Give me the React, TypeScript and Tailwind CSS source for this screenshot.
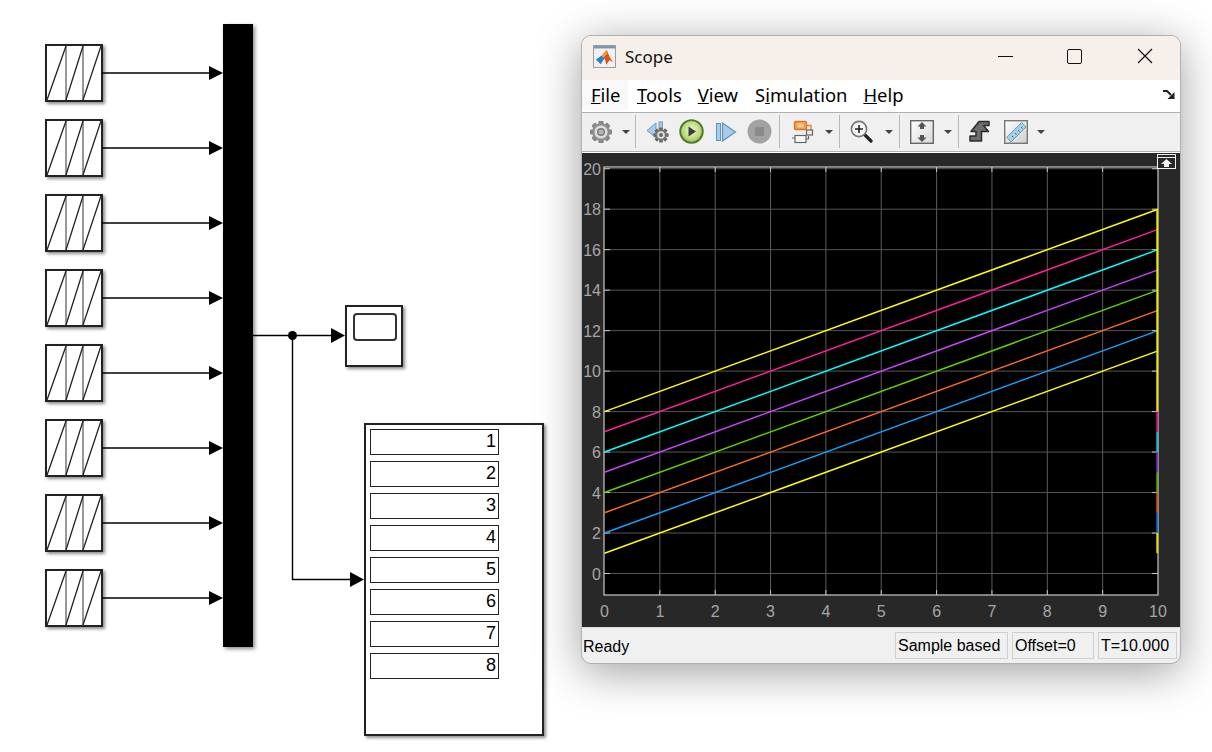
import React from "react";

const sources = [45, 120, 195, 270, 345, 420, 495, 570];
const displayRows = [1, 2, 3, 4, 5, 6, 7, 8];

function Saw() {
  return (
    <svg viewBox="0 0 54 54" className="w-full h-full block">
      <path d="M19 0V54M36 0V54" stroke="#777" strokeWidth="1.5" fill="none" />
      <path d="M0 54L19 0M19 54L36 0M36 54L54 0" stroke="#222" strokeWidth="1.3" fill="none" />
    </svg>
  );
}

function Wires() {
  return (
    <svg className="absolute left-0 top-0 w-[580px] h-[752px]" viewBox="0 0 580 752">
      {sources.map((y) => (
        <g key={y}>
          <path d={`M102 ${y + 28}H210`} stroke="#000" strokeWidth="1.4" />
          <path d={`M209 ${y + 21}L223 ${y + 28}L209 ${y + 35}Z`} fill="#000" />
        </g>
      ))}
      <path d="M253 335.5H332M292.5 335.5V579.5H351" stroke="#000" strokeWidth="1.4" fill="none" />
      <circle cx="292.5" cy="335.5" r="4.5" fill="#000" />
      <path d="M331 328L345 335.5L331 343Z" fill="#000" />
      <path d="M350 572L364 579.5L350 587Z" fill="#000" />
    </svg>
  );
}

function Caret() {
  return <div className="w-0 h-0 border-x-[4px] border-x-transparent border-t-[4px] border-t-[#444]" />;
}

function Sep({ ml }: { ml: string }) {
  return <div className={`w-px h-[33px] bg-[#b8b8b8] ${ml}`} />;
}

function Gear() {
  return (
    <svg width="24" height="24" viewBox="0 0 24 24" className="block">
      <g transform="translate(12 12)">
        {[0, 45, 90, 135].map((a) => (
          <rect key={a} x="-2.6" y="-11" width="5.2" height="22" rx="1" fill="#858585" transform={`rotate(${a})`} />
        ))}
        <circle r="8.8" fill="#8e8e8e" />
        <circle r="6.6" fill="#dedede" />
        <circle r="4" fill="#7a7a7a" />
        <circle r="2.6" fill="#b4b4b4" />
      </g>
    </svg>
  );
}

function BackGear() {
  return (
    <svg width="24" height="24" viewBox="0 0 24 24" className="block">
      <path d="M1 10.5L10 3V18Z" fill="#a9cbe6" stroke="#6c9cc6" strokeWidth="1" />
      <rect x="13" y="2" width="3.4" height="11" fill="#a9cbe6" stroke="#6c9cc6" strokeWidth="1" />
      <g transform="translate(15 15)">
        {[0, 45, 90, 135].map((a) => (
          <rect key={a} x="-1.8" y="-7.6" width="3.6" height="15.2" rx="0.6" fill="#666" transform={`rotate(${a})`} />
        ))}
        <circle r="5.8" fill="#777" />
        <circle r="3.8" fill="#ddd" />
        <circle r="1.9" fill="#666" />
      </g>
    </svg>
  );
}

function Play() {
  return (
    <svg width="25" height="25" viewBox="0 0 25 25" className="block">
      <defs>
        <radialGradient id="playG" cx="0.5" cy="0.45" r="0.6">
          <stop offset="0" stopColor="#f2f8d8" />
          <stop offset="0.65" stopColor="#b9d97a" />
          <stop offset="1" stopColor="#7fae3e" />
        </radialGradient>
      </defs>
      <circle cx="12.5" cy="12.5" r="11.3" fill="url(#playG)" stroke="#4e7a26" strokeWidth="1.8" />
      <path d="M9.5 7.5L17 12.5L9.5 17.5Z" fill="#3c3c3c" />
    </svg>
  );
}

function StepFwd() {
  return (
    <svg width="22" height="22" viewBox="0 0 22 22" className="block">
      <rect x="1.5" y="2.5" width="4" height="17" fill="#a9cbe6" stroke="#5f93c0" strokeWidth="1" />
      <path d="M7.5 2L20.5 11L7.5 20Z" fill="#a9cbe6" stroke="#5f93c0" strokeWidth="1.2" />
    </svg>
  );
}

function Stop() {
  return (
    <svg width="25" height="25" viewBox="0 0 25 25" className="block">
      <circle cx="12.5" cy="12.5" r="12" fill="#a2a2a2" />
      <rect x="8" y="8" width="9" height="9" fill="#8a8a8a" />
    </svg>
  );
}

function Blocks() {
  return (
    <svg width="24" height="24" viewBox="0 0 24 24" className="block">
      <path d="M16 5.5H20V12H16.5M8 21H5" stroke="#e0883a" strokeWidth="1.4" fill="none" />
      <path d="M1 18H4M15 19H17.5V16" stroke="#666" strokeWidth="1.2" fill="none" />
      <rect x="3.5" y="1.5" width="12" height="8" rx="1" fill="#f0a050" stroke="#d9762a" strokeWidth="1.3" />
      <rect x="6.5" y="3.5" width="6" height="4" fill="#f8c890" />
      <rect x="15.5" y="10" width="6" height="5" fill="#eee" stroke="#666" strokeWidth="1.2" />
      <rect x="4" y="15.5" width="11" height="7" fill="#fafafa" stroke="#666" strokeWidth="1.2" />
    </svg>
  );
}

function ZoomIn() {
  return (
    <svg width="23" height="23" viewBox="0 0 23 23" className="block">
      <path d="M14 14L21 21" stroke="#222" strokeWidth="3.2" strokeLinecap="round" />
      <circle cx="9" cy="9" r="7.6" fill="#f6f6f6" stroke="#777" strokeWidth="1.6" />
      <path d="M9 5V13M5 9H13" stroke="#222" strokeWidth="1.6" />
    </svg>
  );
}

function AutoScale() {
  return (
    <svg width="24" height="24" viewBox="0 0 24 24" className="block">
      <defs>
        <linearGradient id="asG" x1="0" y1="0" x2="1" y2="1">
          <stop offset="0" stopColor="#ffffff" />
          <stop offset="1" stopColor="#d8d8d8" />
        </linearGradient>
      </defs>
      <rect x="0.7" y="0.7" width="22.6" height="22.6" fill="url(#asG)" stroke="#666" strokeWidth="1.4" />
      <path d="M12 2L16.5 6.5H14V9H10V6.5H7.5Z" fill="#555" />
      <path d="M12 22L16.5 17.5H14V15H10V17.5H7.5Z" fill="#555" />
    </svg>
  );
}

function StepIcon() {
  return (
    <svg width="21" height="23" viewBox="0 0 21 23" className="block">
      <path d="M10 1.5H20V5.5H14.5L19.5 11.5H12.5V21H1V16H7V11.5H2Z" fill="#6d6d6d" stroke="#2b2b2b" strokeWidth="1.5" strokeLinejoin="round" />
    </svg>
  );
}

function Ruler() {
  return (
    <svg width="24" height="24" viewBox="0 0 24 24" className="block">
      <defs>
        <linearGradient id="rG" x1="0" y1="0" x2="1" y2="1">
          <stop offset="0" stopColor="#ffffff" />
          <stop offset="1" stopColor="#cfcfcf" />
        </linearGradient>
      </defs>
      <rect x="0.7" y="0.7" width="22.6" height="22.6" fill="url(#rG)" stroke="#777" strokeWidth="1.4" />
      <path d="M2.5 17.5L17.5 2.5L22 7L7 22Z" fill="#a3cfe6" stroke="#6f9fbb" strokeWidth="1" />
      <path d="M8 16L9.5 17.5M11 13L12.5 14.5M14 10L15.5 11.5M17 7L18.5 8.5" stroke="#47708a" strokeWidth="1" />
    </svg>
  );
}

function MatlabIcon() {
  return (
    <svg width="23" height="23" viewBox="0 0 24 24" className="block">
      <rect x="0.5" y="0.5" width="23" height="23" fill="#f1f1f1" stroke="#9a9a9a" />
      <rect x="1" y="1" width="22" height="2.6" fill="#7897b4" />
      <path d="M3 15L9 11L12 14L8 20Z" fill="#2e7fcb" />
      <path d="M14 5C16 8 17 14 21.5 18L17 16L14 20.5C13 16 12 14 11 13Z" fill="#d9541a" />
      <path d="M9 11L14 5L15 9L11 13Z" fill="#f09a30" />
    </svg>
  );
}

function Menu({ children, className = "" }: { children: React.ReactNode; className?: string }) {
  return <span className={className}>{children}</span>;
}

function StatusBox({ w, children, ml = "ml-[4px]" }: { w: string; children: React.ReactNode; ml?: string }) {
  return (
    <div className={`${w} ${ml} h-[27px] border border-[#cfcfcf] flex items-center pl-[2px] whitespace-nowrap`}>
      {children}
    </div>
  );
}

const lines = [
  { a: 8, c: "#ffff00" },
  { a: 7, c: "#ff1f98" },
  { a: 6, c: "#00ffff" },
  { a: 5, c: "#c644fc" },
  { a: 4, c: "#5fd100" },
  { a: 3, c: "#ff6a1f" },
  { a: 2, c: "#12a0ff" },
  { a: 1, c: "#ffff00" },
];
const ends = [
  { from: 1, to: 2, c: "#e6e000" },
  { from: 2, to: 3, c: "#0f75d0" },
  { from: 3, to: 4, c: "#d2552a" },
  { from: 4, to: 5, c: "#5fae0a" },
  { from: 5, to: 6, c: "#8a2fc4" },
  { from: 6, to: 7, c: "#12c4d4" },
  { from: 7, to: 8, c: "#e2168c" },
];

const X0 = 604.5;
const XU = 55.35;
const Y0 = 573.5;
const YU = 20.24;
const px = (t: number) => X0 + XU * t;
const py = (v: number) => Y0 - YU * v;

function Plot() {
  const xs = [0, 1, 2, 3, 4, 5, 6, 7, 8, 9, 10];
  const ys = [0, 2, 4, 6, 8, 10, 12, 14, 16, 18, 20];
  return (
    <svg className="block w-full h-full" viewBox="582 153 598 474">
      <rect x="582" y="153" width="598" height="474" fill="#282828" />
      <rect x="604" y="167" width="554" height="428" fill="#000" />
      {xs.slice(1, 10).map((t) => (
        <path key={t} d={`M${px(t)} 167V595`} stroke="#5c5c5c" strokeWidth="1" />
      ))}
      {ys.map((v) => (
        <path key={v} d={`M604 ${py(v)}H1158`} stroke="#555" strokeWidth="1" />
      ))}
      {xs.slice(1, 10).map((t) => (
        <path key={t} d={`M${px(t)} 167V172M${px(t)} 595V590`} stroke="#c4c4c4" strokeWidth="1" />
      ))}
      {ys.map((v) => (
        <path key={v} d={`M604 ${py(v)}H610M1158 ${py(v)}H1152`} stroke="#c4c4c4" strokeWidth="1" />
      ))}
      <rect x="604" y="167" width="554" height="428" fill="none" stroke="#c8c8c8" strokeWidth="1.2" />
      {lines.map((l) => (
        <path key={l.a} d={`M${X0} ${py(l.a)}L${px(10)} ${py(l.a + 10)}`} stroke={l.c} strokeWidth="1.5" fill="none" />
      ))}
      <path d={`M1157.2 ${py(18)}V${py(8)}`} stroke="#f0ea00" strokeWidth="1.8" />
      {ends.map((e) => (
        <path key={e.from} d={`M1157.2 ${py(e.to)}V${py(e.from)}`} stroke={e.c} strokeWidth="1.8" />
      ))}
      <g fontFamily="'Liberation Sans', Arial, sans-serif" fontSize="16" fill="#a6a6a6">
        {ys.map((v) => (
          <text key={v} x="601" y={py(v) + 6} textAnchor="end">{v}</text>
        ))}
        {xs.map((t) => (
          <text key={t} x={px(t)} y="616.5" textAnchor="middle">{t}</text>
        ))}
      </g>
      <rect x="1157.5" y="154.5" width="18" height="14" fill="#282828" stroke="#f2f2f2" strokeWidth="1" />
      <path d="M1158 157.5H1175" stroke="#f2f2f2" strokeWidth="1" />
      <path d="M1166.5 159L1172 164H1169V167H1164V164H1161Z" fill="#f2f2f2" />
    </svg>
  );
}

export default function App() {
  return (
    <div className="relative w-[1212px] h-[752px] bg-white overflow-hidden font-['Liberation_Sans',Arial,sans-serif]">
      {sources.map((y) => (
        <div
          key={y}
          className="absolute left-[45px] w-[58px] h-[58px] bg-white border-2 border-[#222] shadow-[2px_2px_3px_rgba(0,0,0,0.45)]"
          style={{ top: y - 1 }}
        >
          <Saw />
        </div>
      ))}
      <div className="absolute left-[223px] top-[24px] w-[30px] h-[623px] bg-black shadow-[2px_2px_4px_rgba(0,0,0,0.45)]" />
      <Wires />
      <div className="absolute left-[345px] top-[305px] w-[58px] h-[62px] bg-white border-2 border-[#222] shadow-[2px_2px_3px_rgba(0,0,0,0.45)] pl-[6px] pt-[6px]">
        <div className="w-[44px] h-[28px] rounded-[4px] border-2 border-[#333] bg-white" />
      </div>
      <div className="absolute left-[364px] top-[423px] w-[180px] h-[313px] bg-white border-2 border-[#222] shadow-[2px_2px_3px_rgba(0,0,0,0.45)] pl-[4px] pt-[4px] flex flex-col gap-[5.6px]">
        {displayRows.map((n) => (
          <div key={n} className="w-[129px] h-[26.4px] border border-[#222] flex items-center justify-end pr-[2px] pb-[2px] text-[18px] text-black leading-none">
            {n}
          </div>
        ))}
      </div>

      <div className="absolute left-[581px] top-[35px] w-[600px] h-[629px] rounded-[10px] border-[1.5px] border-[#b0b0b0] bg-[#f0f0f0] overflow-hidden flex flex-col shadow-[0_8px_45px_rgba(0,0,0,0.38)]">
        <div className="h-[43.5px] shrink-0 bg-[#f7efea] flex items-center pb-[3px] relative">
          <div className="ml-[11px]"><MatlabIcon /></div>
          <span className="ml-[9px] text-[17px] text-[#111] font-['Noto_Sans',sans-serif]">Scope</span>
          <div className="ml-auto flex items-center">
            <div className="w-[15px] h-px bg-[#111] mr-[54px]" />
            <div className="w-[15px] h-[15px] rounded-[2px] border-[1.4px] border-[#111] mr-[55px]" />
            <svg width="16" height="16" viewBox="0 0 16 16" className="block mr-[27px]">
              <path d="M1 1L15 15M15 1L1 15" stroke="#111" strokeWidth="1.2" />
            </svg>
          </div>
        </div>
        <div className="h-[33px] shrink-0 bg-white border-b border-[#b0b0b0] flex items-center pb-[2px] text-[18.4px] text-black font-['Noto_Sans',sans-serif] relative">
          <Menu className="pl-[9px] w-[46px] bg-[#f9f9f9] h-full flex items-center"><span><span className="underline">F</span>ile</span></Menu>
          <Menu className="ml-[9px]"><span className="underline">T</span>ools</Menu>
          <Menu className="ml-[16px]"><span className="underline">V</span>iew</Menu>
          <Menu className="ml-[17px]">S<span className="underline">i</span>mulation</Menu>
          <Menu className="ml-[16px]"><span className="underline">H</span>elp</Menu>
          <svg width="12" height="10" viewBox="0 0 12 10" className="block ml-auto mr-[5px]">
            <path d="M0 1H4L8 5" stroke="#222" strokeWidth="2" fill="none" />
            <path d="M11.5 2V9H4.5Z" fill="#222" />
          </svg>
        </div>
        <div className="h-[39px] shrink-0 bg-[#f0f0f0] border-b border-[#b0b0b0] flex items-center">
          <div className="ml-[7px]"><Gear /></div>
          <div className="ml-[9px]"><Caret /></div>
          <Sep ml="ml-[5px]" />
          <div className="ml-[10px]"><BackGear /></div>
          <div className="ml-[9px]"><Play /></div>
          <div className="ml-[11px]"><StepFwd /></div>
          <div className="ml-[10px]"><Stop /></div>
          <Sep ml="ml-[7px]" />
          <div className="ml-[11px]"><Blocks /></div>
          <div className="ml-[10px]"><Caret /></div>
          <Sep ml="ml-[6px]" />
          <div className="ml-[10px]"><ZoomIn /></div>
          <div className="ml-[12px]"><Caret /></div>
          <Sep ml="ml-[6px]" />
          <div className="ml-[10px]"><AutoScale /></div>
          <div className="ml-[10px]"><Caret /></div>
          <Sep ml="ml-[6px]" />
          <div className="ml-[10px]"><StepIcon /></div>
          <div className="ml-[14px]"><Ruler /></div>
          <div className="ml-[9px]"><Caret /></div>
        </div>
        <div className="h-px shrink-0 bg-white" />
        <div className="h-[474px] shrink-0"><Plot /></div>
        <div className="flex-1 border-t border-[#dcdcdc] flex items-center text-[16px] text-black">
          <span className="ml-[1px] pt-[3px]">Ready</span>
          <StatusBox w="w-[113px]" ml="ml-auto"><span className="pt-[1px]">Sample based</span></StatusBox>
          <StatusBox w="w-[82px]"><span className="pt-[1px]">Offset=0</span></StatusBox>
          <StatusBox w="w-[79px]" ml="ml-[4px] mr-[3px]"><span className="pt-[1px]">T=10.000</span></StatusBox>
        </div>
      </div>
    </div>
  );
}
